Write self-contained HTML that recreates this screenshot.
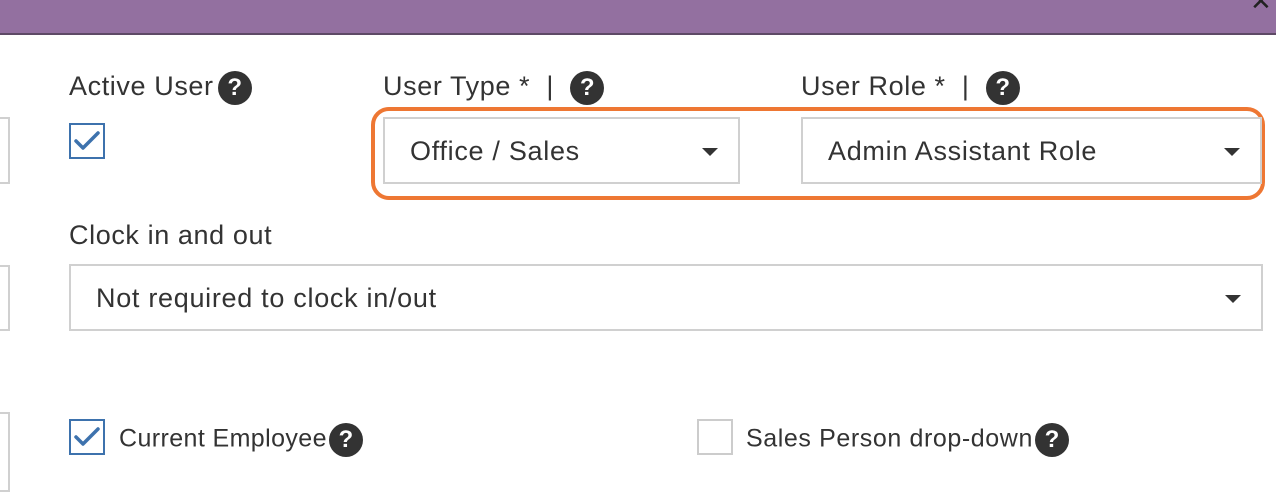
<!DOCTYPE html>
<html><head><style>
body{margin:0;width:1276px;height:476px;overflow:hidden;background:#fff;position:relative;font-family:"Liberation Sans",Arial,sans-serif;color:#333}
.a{position:absolute}
.hdr{left:0;top:0;width:1276px;height:33px;background:#9370a0;border-bottom:2px solid #5e4a66}
.lbl{font-size:27px;letter-spacing:0.6px;white-space:nowrap;line-height:30px}
.q{display:inline-block;width:34px;height:34px;border-radius:50%;background:#333;color:#fff;font-weight:bold;font-size:24px;text-align:center;line-height:34px;vertical-align:middle;letter-spacing:0}
.sel{border:2px solid #d0d0d0;box-sizing:border-box;background:#fff}
.sel span{position:absolute;left:25px;top:17px;font-size:27px;letter-spacing:0.7px;white-space:nowrap;line-height:30px}
.sel i{position:absolute;right:20px;top:29px;width:0;height:0;border-left:8px solid transparent;border-right:8px solid transparent;border-top:8px solid #333}
.cb{width:36px;height:36px;border:2px solid #3d72ad;box-sizing:border-box}
.cb0{width:36px;height:36px;border:2px solid #ccc;box-sizing:border-box}
</style></head><body>
<div class="a hdr"></div>
<div class="a" style="left:1250px;top:-14px;font-size:26px;color:#222">✕</div>

<div class="a lbl" style="left:69px;top:71px">Active User <span class="q" style="margin-left:-4px">?</span></div>
<div class="a cb" style="left:69px;top:123px"><svg width="32" height="32" viewBox="0 0 32 32"><path d="M5 16 L12 23 L27 8" stroke="#3d72ad" stroke-width="3.5" fill="none" stroke-linecap="round" stroke-linejoin="round"/></svg></div>

<div class="a lbl" style="left:383px;top:71px">User Type * &nbsp;| &nbsp;<span class="q">?</span></div>
<div class="a lbl" style="left:801px;top:71px">User Role * &nbsp;| &nbsp;<span class="q">?</span></div>

<div class="a" style="left:371px;top:107px;width:894px;height:93px;border:4px solid #ee7733;border-radius:18px;box-sizing:border-box"></div>
<div class="a sel" style="left:383px;top:117px;width:357px;height:67px"><span>Office / Sales</span><i></i></div>
<div class="a sel" style="left:801px;top:117px;width:461px;height:67px"><span>Admin Assistant Role</span><i></i></div>

<div class="a sel" style="left:-10px;top:117px;width:20px;height:67px"></div>
<div class="a sel" style="left:-10px;top:265px;width:20px;height:66px"></div>
<div class="a sel" style="left:-10px;top:412px;width:20px;height:80px"></div>

<div class="a lbl" style="left:69px;top:220px">Clock in and out</div>
<div class="a sel" style="left:69px;top:264px;width:1194px;height:67px"><span>Not required to clock in/out</span><i></i></div>

<div class="a cb" style="left:69px;top:419px"><svg width="32" height="32" viewBox="0 0 32 32"><path d="M5 16 L12 23 L27 8" stroke="#3d72ad" stroke-width="3.5" fill="none" stroke-linecap="round" stroke-linejoin="round"/></svg></div>
<div class="a lbl" style="left:119px;top:423px;font-size:25px;letter-spacing:0.4px">Current Employee<span class="q" style="margin-left:2px">?</span></div>
<div class="a cb0" style="left:697px;top:419px"></div>
<div class="a lbl" style="left:746px;top:423px;font-size:25px">Sales Person drop-down<span class="q" style="margin-left:2px">?</span></div>
</body></html>
